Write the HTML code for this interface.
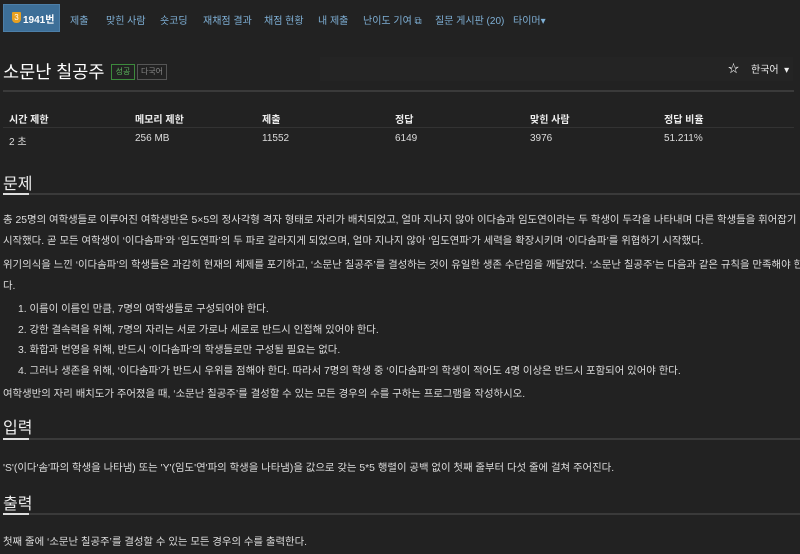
<!DOCTYPE html>
<html><head><meta charset="utf-8"><style>
*{margin:0;padding:0;box-sizing:border-box}
body{width:800px;height:554px;overflow:hidden;background:#222;color:#ddd;font-family:"Liberation Sans","Noto Sans CJK KR",sans-serif;font-size:11px;position:relative}
.a{position:absolute;white-space:nowrap}
.nav{color:#7fb0d6;font-size:10px;top:12px}
.hr{position:absolute;height:2px;background:#3a3a3a}
.th{font-weight:bold;font-size:10px;top:111px;color:#eee}
.td{font-size:10px;top:133px;color:#ddd}
.h2{font-size:16px;color:#eee}
.p{left:3px;font-size:10.4px;color:#ddd}
</style></head><body>
<div class="a" style="left:3px;top:4px;width:57px;height:28px;background:#3d6f98;border:1px solid #4d7fa8"></div>
<div class="a" style="left:12px;top:12px;width:9px;height:11px;background:#e8a020;border-radius:1px 1px 4px 4px;color:#fff;font-size:8px;text-align:center;line-height:11px">3</div>
<div class="a" style="left:23px;top:11px;color:#fff;font-weight:bold;font-size:10px">1941번</div>
<div class="a nav" style="left:70px">제출</div>
<div class="a nav" style="left:106px">맞힌 사람</div>
<div class="a nav" style="left:160px">숏코딩</div>
<div class="a nav" style="left:203px">재채점 결과</div>
<div class="a nav" style="left:264px">채점 현황</div>
<div class="a nav" style="left:318px">내 제출</div>
<div class="a nav" style="left:363px">난이도 기여 ⧉</div>
<div class="a nav" style="left:435px">질문 게시판 (20)</div>
<div class="a nav" style="left:513px">타이머▾</div>
<div class="a" style="left:3px;top:59px;font-size:17.5px;color:#fff">소문난 칠공주</div>
<div class="a" style="left:111px;top:64px;width:24px;height:16px;border:1px solid #3c8a3c;color:#5cb85c;font-size:8px;text-align:center;line-height:14px">성공</div>
<div class="a" style="left:137px;top:64px;width:30px;height:16px;border:1px solid #555;color:#888;font-size:8px;text-align:center;line-height:14px">다국어</div>
<div class="a" style="left:320px;top:57px;width:473px;height:24px;background:#242424"></div>
<div class="a" style="left:728px;top:60px;color:#fff;font-size:11px">☆</div>
<div class="a" style="left:751px;top:61px;color:#eee;font-size:10px">한국어 &nbsp;▾</div>
<div class="hr" style="left:3px;top:90px;width:791px"></div>
<div class="a th" style="left:9px">시간 제한</div>
<div class="a th" style="left:135px">메모리 제한</div>
<div class="a th" style="left:262px">제출</div>
<div class="a th" style="left:395px">정답</div>
<div class="a th" style="left:530px">맞힌 사람</div>
<div class="a th" style="left:664px">정답 비율</div>
<div class="hr" style="left:3px;top:127px;width:791px;height:1px;background:#333"></div>
<div class="a td" style="left:9px">2 초</div>
<div class="a td" style="left:135px">256 MB</div>
<div class="a td" style="left:262px">11552</div>
<div class="a td" style="left:395px">6149</div>
<div class="a td" style="left:530px">3976</div>
<div class="a td" style="left:664px">51.211%</div>
<div class="a h2" style="left:3px;top:170px">문제</div>
<div class="hr" style="left:3px;top:193px;width:797px"></div>
<div class="hr" style="left:3px;top:193px;width:26px;background:#ddd"></div>
<div class="a p" style="top:211px">총 25명의 여학생들로 이루어진 여학생반은 5×5의 정사각형 격자 형태로 자리가 배치되었고, 얼마 지나지 않아 이다솜과 임도연이라는 두 학생이 두각을 나타내며 다른 학생들을 휘어잡기</div>
<div class="a p" style="top:232px">시작했다. 곧 모든 여학생이 ‘이다솜파’와 ‘임도연파’의 두 파로 갈라지게 되었으며, 얼마 지나지 않아 ‘임도연파’가 세력을 확장시키며 ‘이다솜파’를 위협하기 시작했다.</div>
<div class="a p" style="top:256px">위기의식을 느낀 ‘이다솜파’의 학생들은 과감히 현재의 체제를 포기하고, ‘소문난 칠공주’를 결성하는 것이 유일한 생존 수단임을 깨달았다. ‘소문난 칠공주’는 다음과 같은 규칙을 만족해야 한</div>
<div class="a p" style="top:277px">다.</div>
<div class="a p" style="left:18px;top:300px">1. 이름이 이름인 만큼, 7명의 여학생들로 구성되어야 한다.</div>
<div class="a p" style="left:18px;top:321px">2. 강한 결속력을 위해, 7명의 자리는 서로 가로나 세로로 반드시 인접해 있어야 한다.</div>
<div class="a p" style="left:18px;top:341px">3. 화합과 번영을 위해, 반드시 ‘이다솜파’의 학생들로만 구성될 필요는 없다.</div>
<div class="a p" style="left:18px;top:362px">4. 그러나 생존을 위해, ‘이다솜파’가 반드시 우위를 점해야 한다. 따라서 7명의 학생 중 ‘이다솜파’의 학생이 적어도 4명 이상은 반드시 포함되어 있어야 한다.</div>
<div class="a p" style="top:385px">여학생반의 자리 배치도가 주어졌을 때, ‘소문난 칠공주’를 결성할 수 있는 모든 경우의 수를 구하는 프로그램을 작성하시오.</div>
<div class="a h2" style="left:3px;top:414px">입력</div>
<div class="hr" style="left:3px;top:438px;width:797px"></div>
<div class="hr" style="left:3px;top:438px;width:26px;background:#ddd"></div>
<div class="a p" style="top:459px">'S'(이다'솜'파의 학생을 나타냄) 또는 'Y'(임도'연'파의 학생을 나타냄)을 값으로 갖는 5*5 행렬이 공백 없이 첫째 줄부터 다섯 줄에 걸쳐 주어진다.</div>
<div class="a h2" style="left:3px;top:490px">출력</div>
<div class="hr" style="left:3px;top:513px;width:797px"></div>
<div class="hr" style="left:3px;top:513px;width:26px;background:#ddd"></div>
<div class="a p" style="top:533px">첫째 줄에 ‘소문난 칠공주’를 결성할 수 있는 모든 경우의 수를 출력한다.</div>
</body></html>
